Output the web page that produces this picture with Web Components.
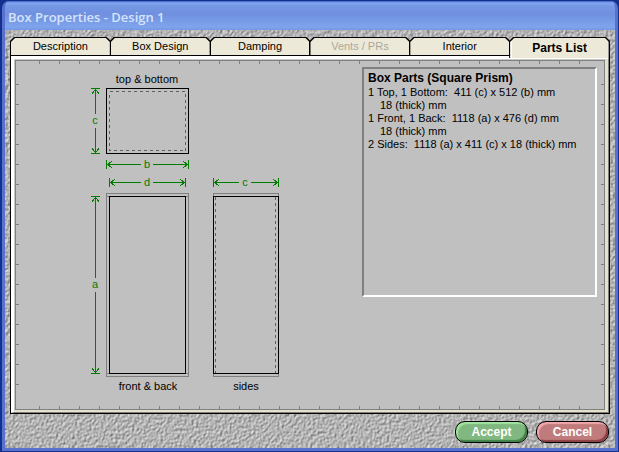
<!DOCTYPE html>
<html lang="en">
<head>
<meta charset="utf-8">
<title>Box Properties - Design 1</title>
<style>
html, body { height: 100%; }
body { margin: 0; background: #12308c; font: 11px/13px "Liberation Sans", Arial, sans-serif; color: #000; }
</style>
</head>
<body>
<dialog-window heading="Box Properties - Design 1">
  <tab-strip slot="tabs">
    <tab-item>Description</tab-item>
    <tab-item>Box Design</tab-item>
    <tab-item>Damping</tab-item>
    <tab-item disabled>Vents / PRs</tab-item>
    <tab-item>Interior</tab-item>
    <tab-item active>Parts List</tab-item>
  </tab-strip>
  <ruled-panel>
    <box-drawing></box-drawing>
    <parts-list></parts-list>
  </ruled-panel>
  <pill-button slot="actions" tone="green">Accept</pill-button>
  <pill-button slot="actions" tone="red">Cancel</pill-button>
</dialog-window>

<script>
function define(name, html, setup) {
  const template = document.createElement('template');
  template.innerHTML = html;
  customElements.define(name, class extends HTMLElement {
    constructor() {
      super();
      this.attachShadow({ mode: 'open' }).append(template.content.cloneNode(true));
    }
    connectedCallback() { if (setup) setup(this, this.shadowRoot); }
  });
}

define('dialog-window', `
<style>
:host { display: block; box-sizing: border-box; height: 100%; padding: 1px 1px 1px 2px; }
.frame { display: flex; flex-direction: column; box-sizing: border-box; height: 100%; border: solid #5870d0; border-width: 0 3px 3px 3px; border-radius: 7px 7px 0 0; overflow: hidden; background: #5870d0; }
header { flex: none; height: 29px; display: flex; align-items: center; margin: 0 -3px; padding: 3px 6px 0; box-sizing: border-box;
  background: linear-gradient(#3c5fc4 0, #84a8f4 2px, #7597e4 5px, #7090df 13px, #7fa4ec 26px, #7298e4 100%); }
h1 { margin: 0; font: 600 13px/18px "Open Sans", "Noto Sans", sans-serif; color: #d6e3fb; white-space: nowrap; }
main { flex: 1; min-height: 0; display: grid; background: #b4b4b4; }
.stone { grid-area: 1 / 1; width: 100%; height: 100%; min-height: 0; display: block; }
.content { grid-area: 1 / 1; min-height: 0; position: relative; display: flex; flex-direction: column; padding: 7px 5px 5px; }
.page { flex: 1; min-height: 0; display: flex; flex-direction: column; }
footer { flex: none; display: flex; justify-content: flex-end; gap: 8px; padding: 7px 1px 0 0; }
</style>
<div class="frame">
  <header><h1></h1></header>
  <main>
    <svg class="stone" aria-hidden="true">
      <filter id="rough" x="0" y="0" width="100%" height="100%" color-interpolation-filters="sRGB">
        <feTurbulence type="fractalNoise" baseFrequency="0.42 0.36" numOctaves="2" seed="8" result="n"/>
        <feDiffuseLighting in="n" surfaceScale="0.8" diffuseConstant="1" lighting-color="#fafafa">
          <feDistantLight azimuth="225" elevation="46"/>
        </feDiffuseLighting>
      </filter>
      <rect width="100%" height="100%" filter="url(#rough)"/>
    </svg>
    <div class="content">
      <slot name="tabs"></slot>
      <div class="page"><slot></slot></div>
      <footer><slot name="actions"></slot></footer>
    </div>
  </main>
</div>`, (host, root) => { root.querySelector('h1').textContent = host.getAttribute('heading'); });

define('tab-strip', `
<style>
:host { display: flex; position: relative; z-index: 1; height: 18px; flex: none; }
::slotted(*) { flex: 1 1 0; }
::slotted(:not(:first-child)) { margin-left: -1px; }
</style>
<slot></slot>`, host => host.setAttribute('role', 'tablist'));

define('tab-item', `
<style>
:host { display: block; height: 19px; }
:host([active]) { height: 21px; }
button { display: grid; width: 100%; height: 100%; padding: 0; border: 0; background: #000; color: inherit; font: inherit;
  clip-path: polygon(4px 0, calc(100% - 4px) 0, 100% 4px, 100% 100%, 0 100%, 0 4px); }
span { display: grid; place-items: center; margin: 1px 1px 1px; background: #ece9d8;
  clip-path: polygon(4px 0, calc(100% - 4px) 0, 100% 4px, 100% 100%, 0 100%, 0 4px); }
:host([disabled]) button { color: #aca899; }
:host([active]) button { font-weight: bold; font-size: 12px; }
:host([active]) span { margin-bottom: 0; background: linear-gradient(90deg, #fff 2px, #ece9d8 2px calc(100% - 1px), #999 0); }
</style>
<button type="button" role="tab"><span><slot></slot></span></button>`, (host, root) => {
  const b = root.querySelector('button');
  b.disabled = host.hasAttribute('disabled');
  b.setAttribute('aria-selected', host.hasAttribute('active'));
});

define('ruled-panel', `
<style>
:host { flex: 1; min-height: 0; display: grid; border: 1px solid #000; background: #c0c0c0; }
.bevel { display: grid; min-height: 0; border: solid; border-width: 3px 1px 1px 3px; border-color: #fff #808074 #808074 #fff; background: #c0c0c0; }
.rim { display: grid; min-height: 0; border: solid; border-width: 1px 3px 2px 1px; border-color: #c8c8c4 #e4e1cf #e4e1cf #c8c8c4; }
.rulers { display: grid; min-height: 0; grid-template: 3px 1fr 3px / 3px 1fr 3px; border: 1px solid #808080; }
.h { grid-column: 1 / 4; margin: 0 12px 0 4px; background: repeating-linear-gradient(90deg, transparent 0 19px, #808080 19px 20px); }
.v { margin: 1px 0 12px; background: repeating-linear-gradient(transparent 0 19px, #808080 19px 20px); }
.content { display: flex; min-width: 0; min-height: 0; padding: 3px 4px 0 66px; }
</style>
<div class="bevel"><div class="rim"><div class="rulers">
  <i class="h"></i>
  <i class="v"></i><div class="content"><slot></slot></div><i class="v"></i>
  <i class="h"></i>
</div></div></div>`, host => host.setAttribute('role', 'tabpanel'));

define('box-drawing', `
<style>
:host { display: block; flex: 1 1 0; min-width: 0; }
svg { display: block; }
text { font-size: 11px; text-anchor: middle; }
.edge, .back, .hidden, .dim { fill: none; stroke: #000; shape-rendering: crispEdges; }
.back { stroke: #808080; }
.hidden { stroke: #606060; stroke-dasharray: 3 3; }
.dim { stroke: #007c00; }
.letter { fill: #007c00; }
</style>
<svg width="200" height="328" viewBox="85 67 200 328" role="img" aria-label="Panel dimensions">
  <text x="147" y="83">top &amp; bottom</text>
  <path class="edge" d="M106.500 88.500H188.500V153.500H106.500Z"/>
  <path class="hidden" d="M109.500 91.500H185.500V150.500H109.500Z"/>
  <path class="dim" d="M91 88.500H100M91 153.500H100M95.500 89V114M95.500 128V153M92 93.500L95.500 89.500L99 93.500M92 148.500L95.500 152.500L99 148.500"/>
  <text class="letter" x="95" y="124">c</text>
  <path class="dim" d="M106.500 160V169M188.500 160V169M107 164.500H141M153 164.500H188M112 161L107.500 164.500L112 168M183 161L187.500 164.500L183 168"/>
  <text class="letter" x="147" y="168">b</text>
  <path class="dim" d="M109.500 178V187M185.500 178V187M110 182.500H141M153 182.500H185M115 179L110.500 182.500L115 186M180 179L184.500 182.500L180 186"/>
  <text class="letter" x="147" y="186">d</text>
  <path class="back" d="M106.500 193.500H188.500V376.500H106.500ZM107 196.500H109M186 196.500H188M107 373.500H109M186 373.500H188"/>
  <path class="edge" d="M109.500 196.500H185.500V373.500H109.500Z"/>
  <path class="dim" d="M91 196.500H100M91 373.500H100M95.500 197V278M95.500 292V373M92 201.500L95.500 197.500L99 201.500M92 368.500L95.500 372.500L99 368.500"/>
  <text class="letter" x="95" y="288">a</text>
  <path class="dim" d="M213.500 178V187M278.500 178V187M214 182.500H239M251 182.500H278M219 179L214.500 182.500L219 186M273 179L277.500 182.500L273 186"/>
  <text class="letter" x="245" y="186">c</text>
  <path class="back" d="M213.500 193.500H278.500V376.500H213.500Z"/>
  <path class="edge" d="M213.500 196.500H278.500V373.500H213.500Z"/>
  <path class="hidden" d="M215.500 197V373M275.500 197V373"/>
  <text x="148" y="390">front &amp; back</text>
  <text x="246" y="390">sides</text>
</svg>`);

define('parts-list', `
<style>
:host { display: block; flex: 0 0 235px; box-sizing: border-box; height: 230px; border: 2px solid; border-color: #808080 #fff #fff #808080; padding: 2px 4px; }
h2 { margin: 0; font: bold 12px/15px "Liberation Sans", Arial, sans-serif; }
ul { list-style: none; margin: 0; padding: 0; }
li { padding-left: 12px; text-indent: -12px; white-space: pre; }
li span { display: block; text-indent: 0; }
</style>
<h2>Box Parts (Square Prism)</h2>
<ul>
<li>1 Top, 1 Bottom:  411 (c) x 512 (b) mm<span>18 (thick) mm</span></li>
<li>1 Front, 1 Back:  1118 (a) x 476 (d) mm<span>18 (thick) mm</span></li>
<li>2 Sides:  1118 (a) x 411 (c) x 18 (thick) mm</li>
</ul>`);

define('pill-button', `
<style>
:host { display: block; }
button { display: block; min-width: 73px; height: 22px; padding: 0 8px; border: 1px solid #000; border-radius: 10px; color: #fff; font: bold 12px/18px "Liberation Sans", Arial, sans-serif;
  background: #80b880; box-shadow: inset 2px 2px 1px #a0e4a0, inset -2px -2px 1px #408048; }
:host([tone=red]) button { background: #c07c7c; box-shadow: inset 2px 2px 1px #f0a8ac, inset -2px -2px 1px #8c4044; }
</style>
<button type="button"><slot></slot></button>`);
</script>
</body>
</html>
